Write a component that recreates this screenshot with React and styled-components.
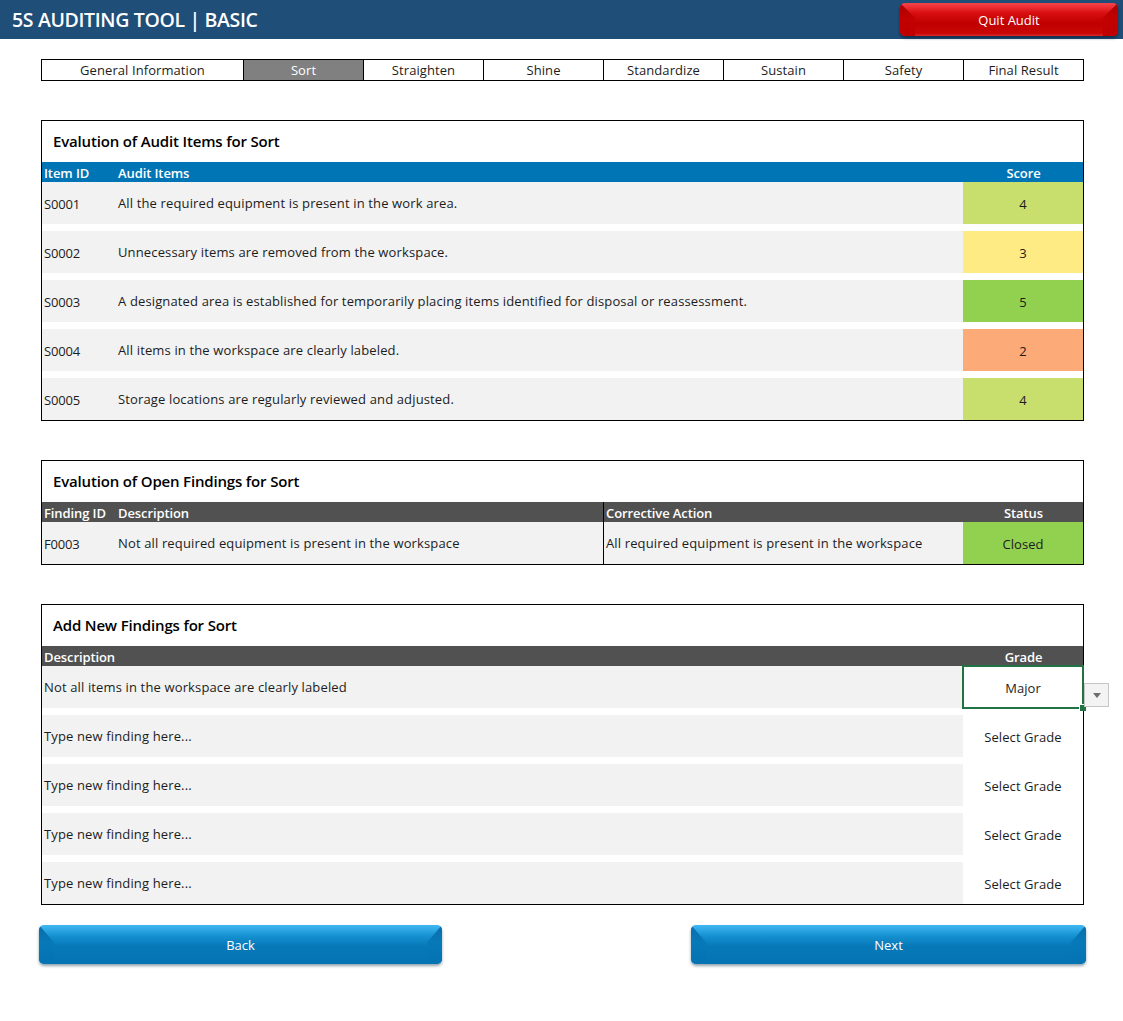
import React from "react"
import styled, { createGlobalStyle } from "styled-components"

const GlobalStyle = createGlobalStyle`
  html, body {
    margin: 0;
    padding: 0;
    background: #fff;
  }
  body {
    font-family: "Open Sans", "Noto Sans", sans-serif;
    font-size: 13px;
    color: #1c1c1c;
  }
`

const Page = styled.div`
  width: 1123px;
  height: 1021px;
  overflow: hidden;
`

const TopBar = styled.header`
  height: 39px;
  background: #1f4e79;
  display: flex;
  align-items: center;
  justify-content: space-between;
  padding: 0 5px 0 12px;
  box-sizing: border-box;
`

const AppTitle = styled.h1`
  margin: 0;
  color: #fff;
  font-size: 19.5px;
  font-weight: 600;
  letter-spacing: -0.35px;
  line-height: 39px;
`

const BevelButton = styled.button`
  position: relative;
  display: block;
  box-sizing: border-box;
  width: ${({ $width }) => $width}px;
  height: ${({ $height }) => $height}px;
  padding: 0;
  border: 0;
  border-radius: 5px;
  color: #fff;
  font: inherit;
  font-size: 13px;
  overflow: visible;
  background: ${({ $red }) => $red
    ? "linear-gradient(#f0474c 0, #f0343a 3px, #d80e10 10px, #c00000 60%, #c80606 92%, #e02a2a 100%)"
    : "linear-gradient(#3fb8f4 0, #35aeeb 3px, #1590d0 11px, #0678b8 55%, #0574b4 100%)"};
  box-shadow: 0 2px 3px ${({ $red }) => $red ? "rgba(15, 30, 50, 0.7)" : "rgba(40, 70, 90, 0.5)"};

  &::before, &::after {
    content: "";
    position: absolute;
    top: 0;
    bottom: 0;
    width: 15px;
    background: ${({ $red }) => $red
      ? "linear-gradient(#a80000 0, #c20101 45%, #c00000 80%)"
      : "linear-gradient(#0b6ca8 0, #0779b9 45%, #0574b4 80%)"};
  }
  &::before {
    left: 0;
    border-radius: 5px 0 0 5px;
    clip-path: polygon(0 0, 100% 45%, 100% 100%, 0 100%);
  }
  &::after {
    right: 0;
    border-radius: 0 5px 5px 0;
    clip-path: polygon(100% 0, 0 45%, 0 100%, 100% 100%);
  }
`

const ButtonLabel = styled.span`
  position: relative;
  z-index: 1;
`

const Content = styled.main`
  margin-left: 41px;
  width: 1043px;
`

const Tabs = styled.nav`
  display: grid;
  grid-template-columns: 201px repeat(6, 120px) 1fr;
  height: 22px;
  margin-top: 20px;
  box-sizing: border-box;
  border: 1px solid #000;
`

const Tab = styled.div`
  display: flex;
  align-items: center;
  justify-content: center;
  border-left: ${({ $first }) => $first ? "0" : "1px solid #000"};
  background: ${({ $active }) => $active ? "#808080" : "#fff"};
  color: ${({ $active }) => $active ? "#fff" : "#1c1c1c"};
  box-sizing: border-box;
  letter-spacing: 0.08px;
`

const Panel = styled.section`
  margin-top: ${({ $top }) => $top}px;
  border: 1px solid #000;
  height: ${({ $height }) => $height}px;
  box-sizing: border-box;
`

const PanelTitle = styled.h2`
  margin: 0;
  height: 41px;
  padding-left: 11px;
  font-size: 15px;
  font-weight: 600;
  line-height: 41px;
  letter-spacing: -0.17px;
  color: #000;
`

const HeaderRow = styled.div`
  display: grid;
  grid-template-columns: ${({ $cols }) => $cols};
  height: 20px;
  background: ${({ $blue }) => $blue ? "#0075b5" : "#515151"};
  color: #fff;
  font-weight: 600;
  line-height: 22px;
  letter-spacing: -0.1px;
`

const HeaderCell = styled.div`
  padding-left: ${({ $center }) => $center ? 1 : 2}px;
  text-align: ${({ $center }) => $center ? "center" : "left"};
  border-left: ${({ $divider }) => $divider ? "1px solid #000" : "0"};
  white-space: nowrap;
`

const Rows = styled.div`
  display: grid;
  row-gap: 7px;
`

const Row = styled.div`
  display: grid;
  grid-template-columns: ${({ $cols }) => $cols};
  height: 42px;
`

const Cell = styled.div`
  display: flex;
  align-items: center;
  padding-left: 2px;
  padding-top: ${({ $id }) => $id ? 2 : 0}px;
  box-sizing: border-box;
  background: #f2f2f2;
  border-left: ${({ $divider }) => $divider ? "1px solid #000" : "0"};
  white-space: nowrap;
  letter-spacing: ${({ $id }) => $id ? "-0.2px" : "0.14px"};
`

const ScoreCell = styled.div`
  position: relative;
  display: flex;
  align-items: center;
  justify-content: center;
  padding-top: 1px;
  box-sizing: border-box;
  letter-spacing: 0.08px;
  background: ${({ $color }) => $color || "#fff"};
`

const Selection = styled.div`
  position: absolute;
  inset: -1px -1px -1px -1px;
  border: 2px solid #217346;
  box-sizing: border-box;

  &::after {
    content: "";
    position: absolute;
    right: -4px;
    bottom: -4px;
    width: 6px;
    height: 6px;
    background: #217346;
    border: 1px solid #fff;
    border-width: 1px 0 0 1px;
  }
`

const DropArrow = styled.div`
  position: absolute;
  left: 121px;
  top: 17px;
  width: 25px;
  height: 24px;
  box-sizing: border-box;
  background: #f3f3f3;
  border: 1px solid #c6c6c6;
  display: flex;
  align-items: center;
  justify-content: center;

  &::before {
    content: "";
    border-style: solid;
    border-width: 5px 4.5px 0;
    border-color: #6d6d6d transparent transparent;
  }
`

const Actions = styled.div`
  display: flex;
  justify-content: space-between;
  margin: 20px -2px 0;
`

const SCORE_COLORS = {
  5: "#92d050",
  4: "#c9df6d",
  3: "#ffeb84",
  2: "#fcaa78"
}

const TABS = ["General Information", "Sort", "Straighten", "Shine", "Standardize", "Sustain", "Safety", "Final Result"]

const AUDIT_ITEMS = [
  ["S0001", "All the required equipment is present in the work area.", 4],
  ["S0002", "Unnecessary items are removed from the workspace.", 3],
  ["S0003", "A designated area is established for temporarily placing items identified for disposal or reassessment.", 5],
  ["S0004", "All items in the workspace are clearly labeled.", 2],
  ["S0005", "Storage locations are regularly reviewed and adjusted.", 4]
]

const NEW_FINDINGS = [
  "Not all items in the workspace are clearly labeled",
  "Type new finding here...",
  "Type new finding here...",
  "Type new finding here...",
  "Type new finding here..."
]

const AUDIT_COLS = "74px 847px 120px"
const OPEN_COLS = "74px 487px 360px 120px"
const NEW_COLS = "921px 120px"

export default function App() {
  return (
    <Page>
      <GlobalStyle />
      <TopBar>
        <AppTitle>5S AUDITING TOOL | BASIC</AppTitle>
        <BevelButton $red $width={218} $height={33}><ButtonLabel>Quit Audit</ButtonLabel></BevelButton>
      </TopBar>
      <Content>
        <Tabs>
          {TABS.map((tab, i) => (
            <Tab key={tab} $first={i === 0} $active={tab === "Sort"}>{tab}</Tab>
          ))}
        </Tabs>

        <Panel $top={39} $height={301}>
          <PanelTitle>Evalution of Audit Items for Sort</PanelTitle>
          <HeaderRow $blue $cols={AUDIT_COLS}>
            <HeaderCell>Item ID</HeaderCell>
            <HeaderCell>Audit Items</HeaderCell>
            <HeaderCell $center>Score</HeaderCell>
          </HeaderRow>
          <Rows>
            {AUDIT_ITEMS.map(([id, text, score]) => (
              <Row key={id} $cols={AUDIT_COLS}>
                <Cell $id>{id}</Cell>
                <Cell>{text}</Cell>
                <ScoreCell $color={SCORE_COLORS[score]}>{score}</ScoreCell>
              </Row>
            ))}
          </Rows>
        </Panel>

        <Panel $top={39} $height={105}>
          <PanelTitle>Evalution of Open Findings for Sort</PanelTitle>
          <HeaderRow $cols={OPEN_COLS}>
            <HeaderCell>Finding ID</HeaderCell>
            <HeaderCell>Description</HeaderCell>
            <HeaderCell $divider>Corrective Action</HeaderCell>
            <HeaderCell $center>Status</HeaderCell>
          </HeaderRow>
          <Row $cols={OPEN_COLS}>
            <Cell $id>F0003</Cell>
            <Cell>Not all required equipment is present in the workspace</Cell>
            <Cell $divider>All required equipment is present in the workspace</Cell>
            <ScoreCell $color={SCORE_COLORS[5]}>Closed</ScoreCell>
          </Row>
        </Panel>

        <Panel $top={39} $height={301}>
          <PanelTitle>Add New Findings for Sort</PanelTitle>
          <HeaderRow $cols={NEW_COLS}>
            <HeaderCell>Description</HeaderCell>
            <HeaderCell $center>Grade</HeaderCell>
          </HeaderRow>
          <Rows>
            {NEW_FINDINGS.map((text, i) => (
              <Row key={i} $cols={NEW_COLS}>
                <Cell>{text}</Cell>
                <ScoreCell>
                  {i === 0 ? "Major" : "Select Grade"}
                  {i === 0 && <Selection />}
                  {i === 0 && <DropArrow />}
                </ScoreCell>
              </Row>
            ))}
          </Rows>
        </Panel>

        <Actions>
          <BevelButton $width={403} $height={39}><ButtonLabel>Back</ButtonLabel></BevelButton>
          <BevelButton $width={395} $height={39}><ButtonLabel>Next</ButtonLabel></BevelButton>
        </Actions>
      </Content>
    </Page>
  )
}
